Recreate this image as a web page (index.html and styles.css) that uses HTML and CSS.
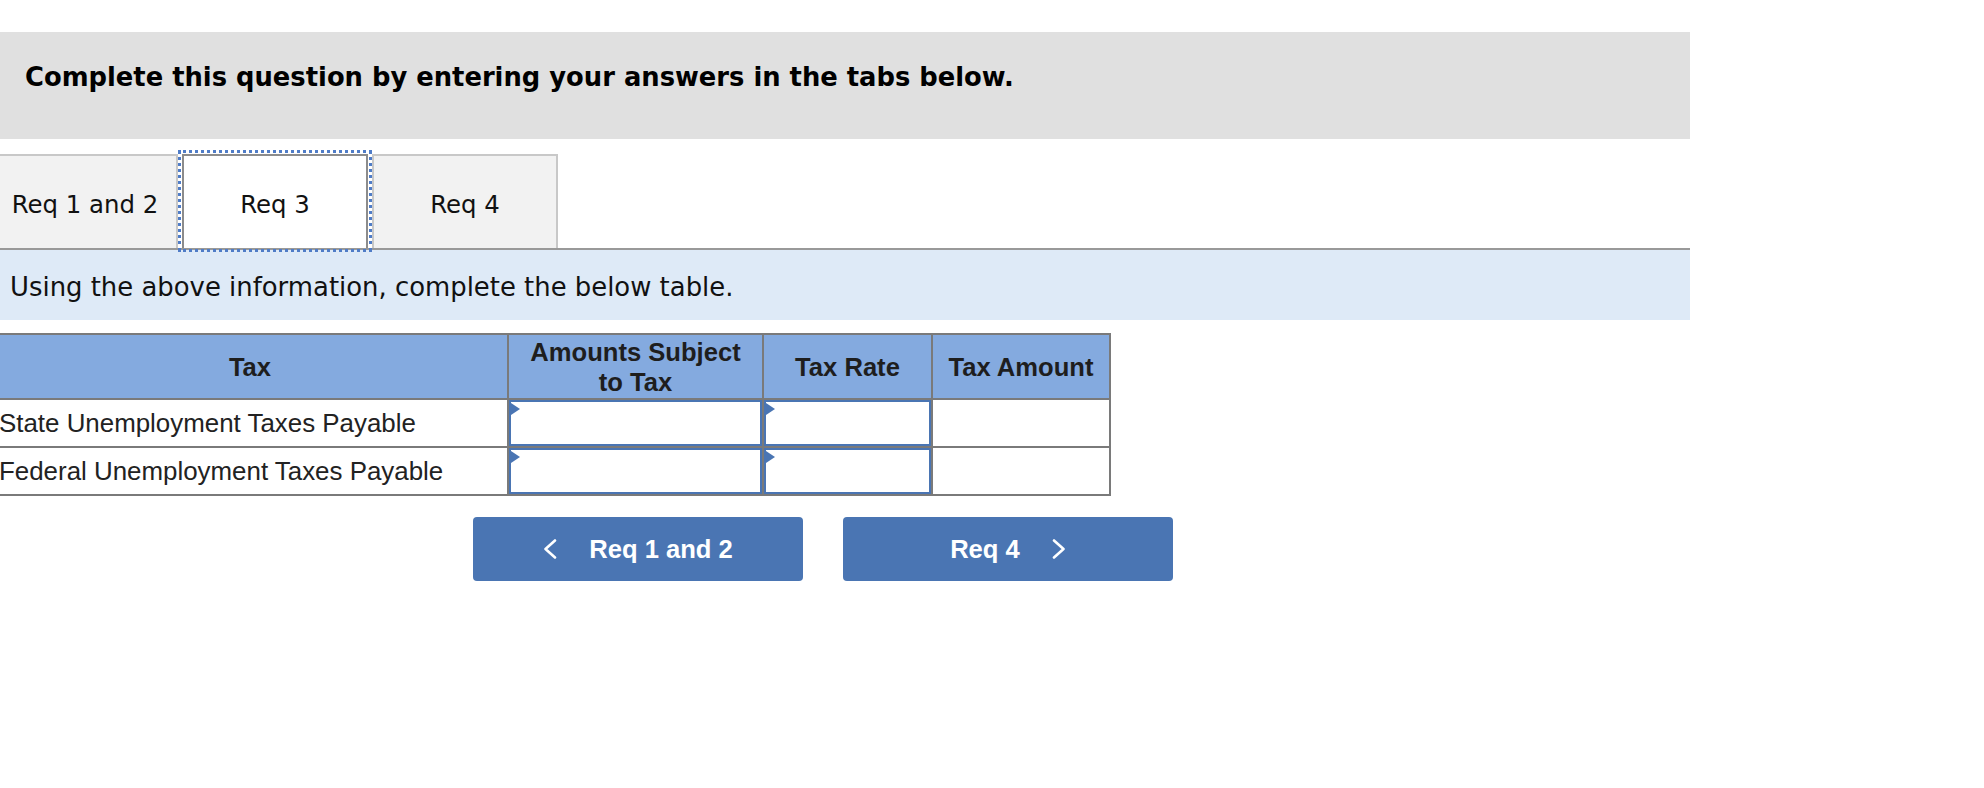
FILE: index.html
```html
<!DOCTYPE html>
<html lang="en">
<head>
    <meta charset="UTF-8">
    <meta name="viewport" content="width=device-width, initial-scale=1.0">
    <title>Req 3 - Unemployment Taxes</title>
    <link rel="stylesheet" href="styles.css">
</head>
<body>
    <div class="question">
        <div class="prompt">
            <p>Complete this question by entering your answers in the tabs below.</p>
        </div>

        <div class="tabs">
            <button type="button" class="tab">Req 1 and 2</button>
            <button type="button" class="tab active">Req 3</button>
            <button type="button" class="tab">Req 4</button>
        </div>

        <div class="instructions">Using the above information, complete the below table.</div>

        <table class="answer-table">
            <thead>
                <tr>
                    <th class="col-tax">Tax</th>
                    <th class="col-amount">Amounts Subject<br>to Tax</th>
                    <th class="col-rate">Tax Rate</th>
                    <th class="col-total">Tax Amount</th>
                </tr>
            </thead>
            <tbody>
                <tr>
                    <td class="label">State Unemployment Taxes Payable</td>
                    <td class="entry"><div class="input-wrap"><input type="text"><span class="marker"></span></div></td>
                    <td class="entry"><div class="input-wrap"><input type="text"><span class="marker"></span></div></td>
                    <td></td>
                </tr>
                <tr>
                    <td class="label">Federal Unemployment Taxes Payable</td>
                    <td class="entry"><div class="input-wrap"><input type="text"><span class="marker"></span></div></td>
                    <td class="entry"><div class="input-wrap"><input type="text"><span class="marker"></span></div></td>
                    <td></td>
                </tr>
            </tbody>
        </table>

        <div class="nav-buttons">
            <button type="button" class="nav-button">
                <svg width="14" height="20" viewBox="0 0 14 20"><polyline points="12,1.5 2.5,10 12,18.5"/></svg>
                <span>Req 1 and 2</span>
            </button>
            <button type="button" class="nav-button">
                <span>Req 4</span>
                <svg width="14" height="20" viewBox="0 0 14 20"><polyline points="2,1.5 11.5,10 2,18.5"/></svg>
            </button>
        </div>
    </div>
</body>
</html>
```

FILE: styles.css
```css
:root {
    --prompt-bg: #e0e0e0;
    --tab-bg: #f2f2f2;
    --info-bg: #deeaf7;
    --header-bg: #84aadf;
    --grid-color: #7a7a7a;
    --accent: #4a75b3;
}

body {
    margin: 0;
    background: white;
    color: #111;
}

.question {
    width: 1690px;
    overflow: hidden;
}

.prompt {
    margin-top: 32px;
    height: 107px;
    box-sizing: border-box;
    padding: 30px 25px 0;
    background: var(--prompt-bg);
}

.prompt p {
    margin: 0;
    font-family: "DejaVu Sans", Verdana, sans-serif;
    font-weight: bold;
    font-size: 25.8px;
    line-height: 31px;
    color: #000;
}

.tabs {
    display: flex;
    margin-top: 15px;
    margin-left: -8px;
    border-bottom: 2px solid #999;
}

.tab {
    width: 186px;
    height: 94px;
    box-sizing: border-box;
    margin: 0;
    padding: 4px 0 0;
    background: var(--tab-bg);
    border: 2px solid #c8c8c8;
    border-bottom: none;
    font-family: "DejaVu Sans", Verdana, sans-serif;
    font-size: 24.4px;
    color: #111;
    cursor: pointer;
}

.tab.active {
    margin: 0 4px;
    background: white;
    border-color: #8c8c8c;
    outline: 3px dotted #4f7cc7;
    outline-offset: 1px;
}

.instructions {
    display: flex;
    align-items: center;
    height: 70px;
    box-sizing: border-box;
    padding: 3px 0 0 10px;
    background: var(--info-bg);
    font-family: "DejaVu Sans", Verdana, sans-serif;
    font-size: 25.9px;
    color: #111;
}

.answer-table {
    margin-top: 13px;
    margin-left: -9px;
    border-collapse: collapse;
    font-family: "Liberation Sans", Arial, sans-serif;
    font-size: 25.6px;
    color: #222;
}

.answer-table th,
.answer-table td {
    border: 2px solid var(--grid-color);
    padding: 0;
}

.answer-table th {
    height: 63px;
    background: var(--header-bg);
    font-weight: bold;
    line-height: 30px;
    color: #1e1e1e;
}

.col-tax { width: 514px; }
.col-amount { width: 253px; }
.col-rate { width: 167px; }
.col-total { width: 176px; }

.answer-table td {
    height: 46px;
}

.answer-table td.label {
    padding-left: 6px;
    text-align: left;
    white-space: nowrap;
    font-size: 25.9px;
}

.input-wrap {
    position: relative;
    height: 46px;
}

.input-wrap input {
    display: block;
    width: 100%;
    height: 46px;
    box-sizing: border-box;
    margin: 0;
    border: 2px solid var(--accent);
    background: white;
    font-size: 24px;
}

.marker {
    position: absolute;
    top: 3px;
    left: 2px;
    width: 0;
    height: 0;
    border-left: 9px solid var(--accent);
    border-top: 6px solid transparent;
    border-bottom: 6px solid transparent;
}

.nav-buttons {
    display: flex;
    gap: 40px;
    margin-top: 21px;
    padding-left: 473px;
}

.nav-button {
    display: flex;
    align-items: center;
    justify-content: center;
    gap: 32px;
    width: 330px;
    height: 64px;
    margin: 0;
    padding: 0;
    border: none;
    border-radius: 4px;
    background: var(--accent);
    color: white;
    font-family: "Liberation Sans", Arial, sans-serif;
    font-weight: bold;
    font-size: 25.6px;
    cursor: pointer;
}

.nav-button svg polyline {
    fill: none;
    stroke: white;
    stroke-width: 2.6;
    stroke-linecap: round;
    stroke-linejoin: round;
}
```
